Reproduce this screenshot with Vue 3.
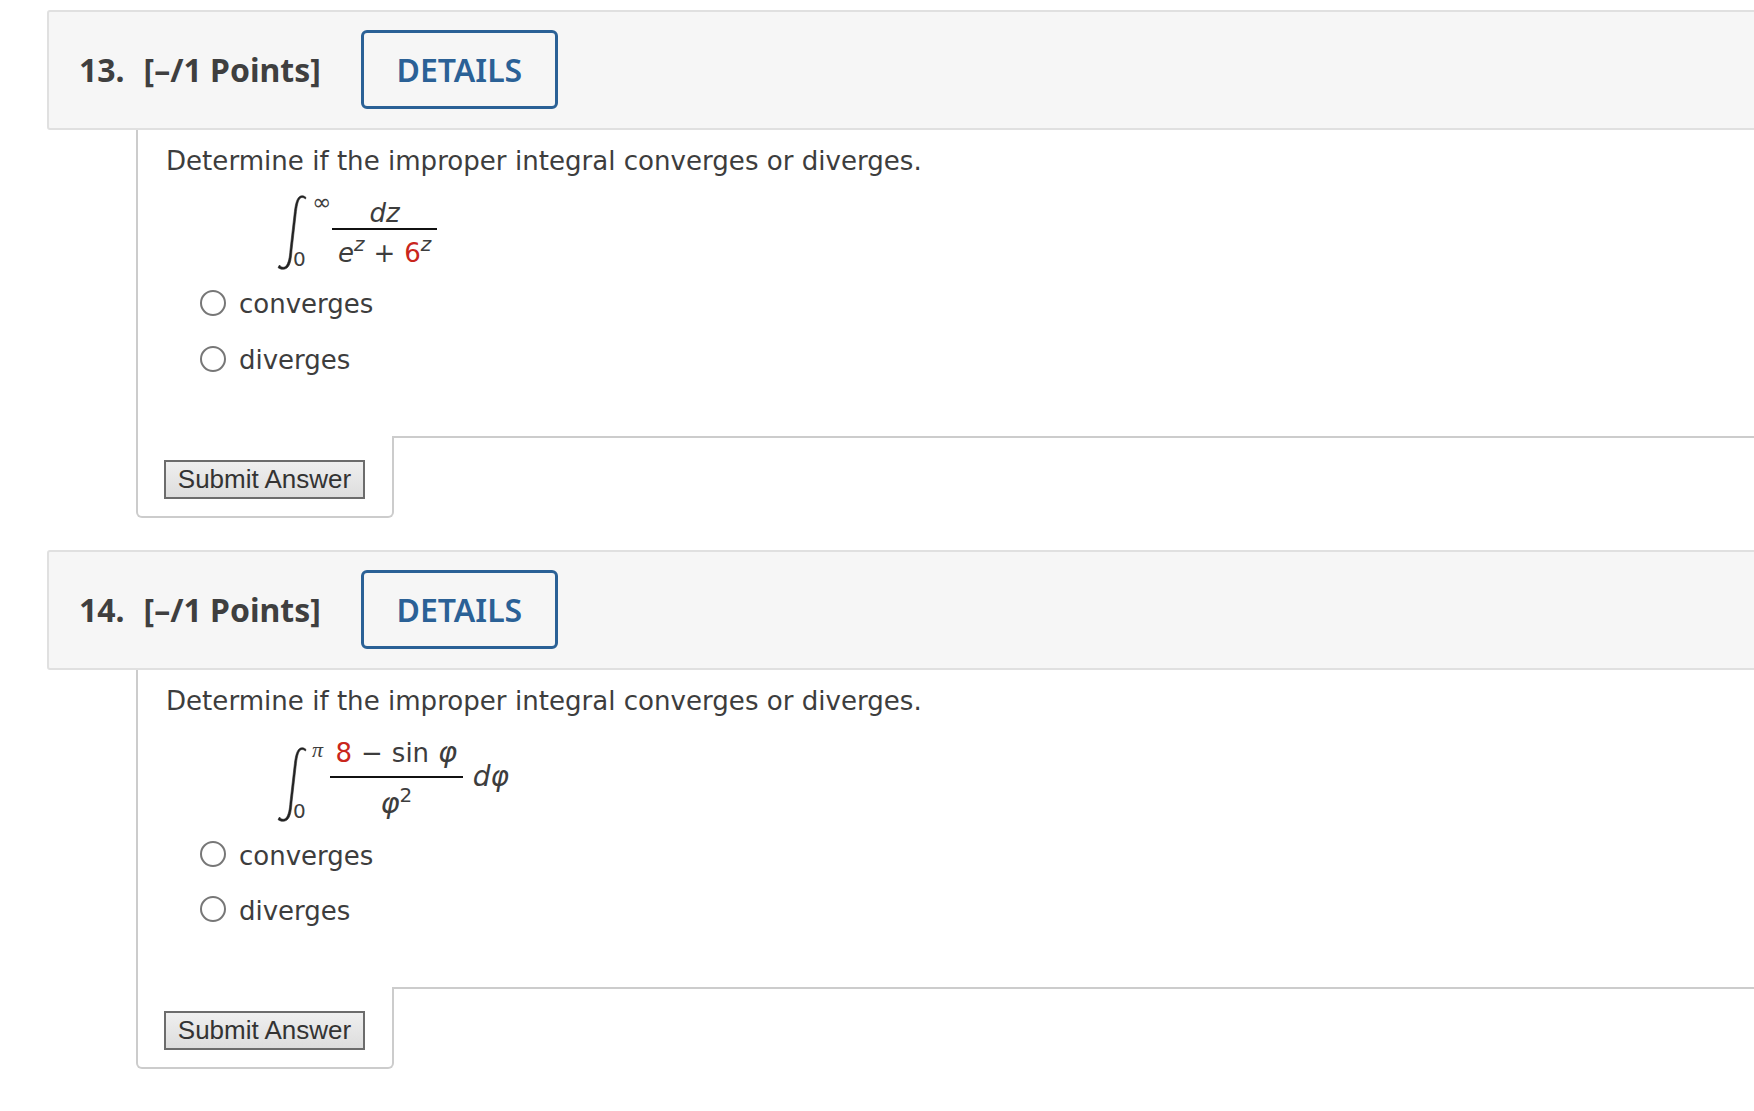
<script setup>
const options = ['converges', 'diverges'];
const questions = [
  { id: 13, kind: 'exp' },
  { id: 14, kind: 'phi' },
];
</script>

<template>
  <div class="page">
    <section v-for="q in questions" :key="q.id" class="question" :class="'q' + q.id">
      <header class="head">
        <span class="num">{{ q.id }}.</span>
        <span class="points">[–/1 Points]</span>
        <button type="button" class="details">DETAILS</button>
      </header>
      <div class="body">
        <div class="content">
          <p class="prompt">Determine if the improper integral converges or diverges.</p>
          <div class="math">
            <svg class="integral" width="30" height="75" viewBox="0 0 30 75">
              <path d="M29 2.500C27 .5 24 0 22 2c-3 3-4 9-5 18l-4 35c-.5 7-1.500 13-4 16-2 2-5 1.500-6.500-1L1 72.500c2 2 6 2.500 9 .5 3.500-2.500 4.500-10 5-18l4-35c1-9 2-15 4.500-17 1.500-1 3.500-.5 5 1z" fill="#222" stroke="#222" stroke-width=".6" />
            </svg>
            <div class="limits">
              <span v-if="q.kind === 'exp'" class="upper">∞</span>
              <span v-else class="upper pi">π</span>
              <span class="lower">0</span>
            </div>
            <div v-if="q.kind === 'exp'" class="frac">
              <div class="over"><i>dz</i></div>
              <div class="under"><i>e<sup>z</sup></i><span class="op">+</span><b class="given">6</b><sup><i>z</i></sup></div>
            </div>
            <div v-else class="frac wide">
              <div class="over"><b class="given">8</b><span class="op">−</span><span>sin</span><i class="phi">φ</i></div>
              <div class="under"><i class="phi-sym">φ</i><sup>2</sup></div>
            </div>
            <i v-if="q.kind === 'phi'" class="dphi">dφ</i>
          </div>
          <label v-for="o in options" :key="o" class="option">
            <input type="radio" :name="'q' + q.id" />
            <span>{{ o }}</span>
          </label>
        </div>
        <div class="foot">
          <div class="submit-box">
            <button type="button" class="submit">Submit Answer</button>
          </div>
          <div class="rest"></div>
        </div>
      </div>
    </section>
  </div>
</template>

<style>
html, body {
  margin: 0;
  background: #fff;
  overflow: hidden;
}
</style>

<style scoped>
.page {
  width: 1800px;
  padding: 10px 0 0 47px;
  box-sizing: border-box;
  color: #3d3d3d;
  font-family: "DejaVu Sans", Verdana, sans-serif;
}

.question {
  margin-bottom: 32px;
}

.head {
  display: flex;
  align-items: center;
  height: 120px;
  box-sizing: border-box;
  padding: 0 0 2px 30px;
  background: #f6f6f6;
  border: 2px solid #e0e0e0;
  border-radius: 3px 0 0 3px;
  font-family: "Noto Sans", "Open Sans", sans-serif;
}

.num,
.points {
  font-size: 32px;
  font-weight: 700;
  color: #3f3f3f;
}

.points {
  margin-left: 19px;
}

.details {
  width: 197px;
  height: 79px;
  margin-left: 40px;
  padding: 0;
  background: transparent;
  border: 3.500px solid #2b6196;
  border-radius: 6px;
  color: #2b6196;
  font-family: inherit;
  font-size: 32px;
  font-weight: 600;
}

.body {
  margin-left: 89px;
}

.content {
  border-left: 2px solid #ccc;
  padding: 0 0 48px 28px;
}

.q14 .content {
  padding-bottom: 49px;
}

.prompt {
  margin: 0;
  padding-top: 15px;
  font-size: 26.080px;
  line-height: 32px;
}

.math {
  display: flex;
  align-items: flex-start;
  margin-left: 111px;
  height: 81px;
  padding-top: 18px;
}

.q14 .math {
  height: 81px;
  padding-top: 30px;
}

.limits {
  display: flex;
  flex-direction: column;
  justify-content: space-between;
  width: 39px;
  height: 74px;
  margin-left: -14px;
}

.upper {
  margin-left: 19px;
  font-size: 23px;
  line-height: 14px;
}

.lower {
  font-size: 20px;
  line-height: 20px;
}

.pi {
  margin-top: -4px;
  font-family: "Liberation Serif", serif;
  font-size: 22px;
  font-style: italic;
}

.frac {
  display: flex;
  flex-direction: column;
  font-size: 26px;
  text-align: center;
}

.frac .over {
  height: 33px;
  padding: 0 5.500px;
  border-bottom: 2px solid #111;
  line-height: 36px;
}

.frac .under {
  height: 42px;
  padding: 0 6px;
  line-height: 46px;
}

.frac.wide {
  margin: -12px 0 0 -2px;
}

.frac.wide .over {
  height: 41px;
  line-height: 34px;
}

.frac.wide .under {
  line-height: 50px;
}

.frac sup {
  font-size: 20px;
  line-height: 0;
  vertical-align: 11px;
}

.op {
  margin: 0 9px;
}

.given {
  color: #c9261c;
  font-weight: 400;
}

.phi {
  margin-left: 9px;
  font-size: 29px;
}

.phi-sym {
  font-size: 29px;
}

.dphi {
  margin: 14px 0 0 10px;
  font-size: 28px;
  line-height: 32px;
}

.option {
  display: flex;
  align-items: center;
  gap: 13px;
  height: 56px;
  margin-left: 34px;
  font-size: 26px;
}

.q14 .option {
  height: 55px;
}

.option input {
  appearance: none;
  width: 26px;
  height: 26px;
  margin: -3px 0 0;
  background: #fff;
  border: 2px solid #777;
  border-radius: 50%;
}

.foot {
  display: flex;
}

.submit-box {
  width: 258px;
  height: 82px;
  box-sizing: border-box;
  padding: 24px 0 0 26px;
  border: 2px solid #ccc;
  border-top: 0;
  border-radius: 0 0 6px 6px;
}

.rest {
  flex: 1;
  border-top: 2px solid #ccc;
}

.submit {
  display: block;
  width: 201px;
  height: 39px;
  padding: 0;
  background: linear-gradient(#efefef, #ddd);
  border: 2px solid #6c6c6c;
  color: #333;
  font-family: "Liberation Sans", Arial, sans-serif;
  font-size: 26px;
}
</style>
